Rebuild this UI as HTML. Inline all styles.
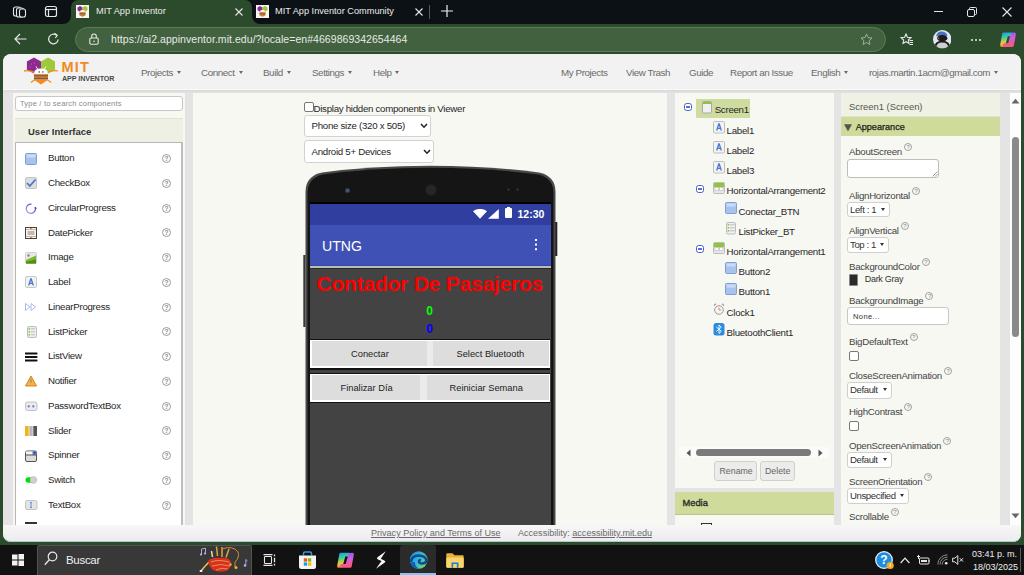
<!DOCTYPE html>
<html><head><meta charset="utf-8">
<style>
*{box-sizing:border-box;margin:0;padding:0}
html,body{width:1024px;height:575px;overflow:hidden;background:#2c4a2c;font-family:"Liberation Sans",sans-serif;position:relative}
.a{position:absolute}
.t{position:absolute;white-space:nowrap;line-height:1}
.nav{position:absolute;white-space:nowrap;line-height:1;color:#6a6a6a;font-size:9.8px;letter-spacing:-0.42px;top:67.7px}
.car{display:inline-block;width:0;height:0;border-left:2px solid transparent;border-right:2px solid transparent;border-top:3px solid #6a6a6a;vertical-align:middle;margin-left:4px;position:relative;top:-0.9px}
.pi{position:absolute;white-space:nowrap;line-height:1;color:#262626;font-size:9.7px;letter-spacing:-0.28px;margin-top:-0.42px}
.hq{position:absolute;width:9px;height:9px;border:1px solid #9a9a9a;border-radius:50%;font-size:6.5px;line-height:7px;text-align:center;color:#888;font-weight:bold}
.tr{position:absolute;white-space:nowrap;line-height:1;color:#262626;font-size:9.1px}
.pl{position:absolute;white-space:nowrap;line-height:1;color:#444;font-size:9.7px;letter-spacing:-0.28px;margin-top:-0.5px;left:849px}
.sel{position:absolute;left:847px;height:17px;border:1px solid #cfcfcf;border-radius:3px;background:#fff;font-size:9.6px;letter-spacing:-0.4px;color:#333;line-height:13.5px;padding-left:2px;white-space:nowrap}
.cb{position:absolute;left:849px;width:10px;height:10px;border:1px solid #777;border-radius:2px;background:#fff}
.phq{position:absolute;width:8px;height:8px;border:1px solid #a0a0a0;border-radius:50%;font-size:6px;line-height:6px;text-align:center;color:#888}
</style></head><body>
<!-- ============ TAB BAR ============ -->
<div class="a" style="left:0;top:0;width:1024px;height:24px;background:#0c1116"></div>
<!-- workspaces icon -->
<svg class="a" style="left:12px;top:5px" width="16" height="14" viewBox="0 0 16 14"><g fill="none" stroke="#e6e6e6" stroke-width="1.1"><rect x="1.5" y="2" width="7" height="9" rx="2"/><rect x="4.5" y="3" width="7" height="9" rx="2" fill="#0c1116"/><rect x="7.5" y="4" width="6" height="8" rx="2" fill="#0c1116"/></g></svg>
<svg class="a" style="left:44px;top:5px" width="14" height="13" viewBox="0 0 14 13"><g fill="none" stroke="#e6e6e6" stroke-width="1.2"><rect x="1.5" y="1.5" width="11" height="10" rx="2"/><line x1="1.5" y1="4.5" x2="12.5" y2="4.5"/><line x1="4.5" y1="4.5" x2="4.5" y2="11.5"/></g></svg>
<div class="a" style="left:71px;top:0;width:181px;height:25px;background:#2c4a2c;border-radius:7px 7px 0 0"></div>
<div class="a" style="left:63px;top:16px;width:8px;height:8px;background:#2c4a2c"></div><div class="a" style="left:62px;top:15px;width:9px;height:9px;background:#0c1116;border-bottom-right-radius:8px"></div>
<div class="a" style="left:252px;top:16px;width:8px;height:8px;background:#2c4a2c"></div><div class="a" style="left:252px;top:15px;width:9px;height:9px;background:#0c1116;border-bottom-left-radius:8px"></div>
<!-- favicon tab 1 -->
<svg class="a" style="left:76px;top:5px" width="13" height="13" viewBox="0 0 13 13"><rect width="13" height="13" fill="#f6f6f6"/><path d="M4 1L6.5 2.4V5.3L4 6.7L1.5 5.3V2.4Z" fill="#8d2a8e"/><path d="M9 1L11.5 2.4V5.3L9 6.7L6.5 5.3V2.4Z" fill="#9dc93b"/><path d="M3.5 6.5H9.5V10L6.5 12L3.5 10Z" fill="#f48b1f"/><path d="M3.8 6.8Q3.8 5 6.5 5Q9.2 5 9.2 6.8Z" fill="#fff"/><rect x="3.5" y="8" width="6" height="0.8" fill="#666"/><rect x="3.5" y="9.5" width="6" height="0.8" fill="#666"/></svg>
<div class="t" style="left:96px;top:7px;font-size:9.2px;color:#ececec">MIT App Inventor</div>
<svg class="a" style="left:235px;top:8px" width="8" height="8" viewBox="0 0 8 8"><path d="M0.5 0.5L7.5 7.5M7.5 0.5L0.5 7.5" stroke="#e6e6e6" stroke-width="1.1"/></svg>
<svg class="a" style="left:256px;top:5px" width="13" height="13" viewBox="0 0 13 13"><rect width="13" height="13" fill="#f6f6f6"/><path d="M4 1L6.5 2.4V5.3L4 6.7L1.5 5.3V2.4Z" fill="#8d2a8e"/><path d="M9 1L11.5 2.4V5.3L9 6.7L6.5 5.3V2.4Z" fill="#9dc93b"/><path d="M3.5 6.5H9.5V10L6.5 12L3.5 10Z" fill="#f48b1f"/><path d="M3.8 6.8Q3.8 5 6.5 5Q9.2 5 9.2 6.8Z" fill="#fff"/><rect x="3.5" y="8" width="6" height="0.8" fill="#666"/><rect x="3.5" y="9.5" width="6" height="0.8" fill="#666"/></svg>
<div class="t" style="left:275px;top:7px;font-size:9.2px;color:#ececec">MIT App Inventor Community</div>
<svg class="a" style="left:415px;top:8px" width="8" height="8" viewBox="0 0 8 8"><path d="M0.5 0.5L7.5 7.5M7.5 0.5L0.5 7.5" stroke="#e6e6e6" stroke-width="1.1"/></svg>
<div class="a" style="left:429px;top:5px;width:1px;height:14px;background:#5a5a5a"></div>
<svg class="a" style="left:441px;top:5px" width="12" height="12" viewBox="0 0 12 12"><path d="M6 0V12M0 6H12" stroke="#ececec" stroke-width="1.2"/></svg>
<!-- window controls -->
<div class="a" style="left:934px;top:11px;width:9px;height:1px;background:#e6e6e6"></div>
<svg class="a" style="left:967px;top:7px" width="10" height="10" viewBox="0 0 10 10"><g fill="none" stroke="#e6e6e6" stroke-width="1"><rect x="0.5" y="2.5" width="7" height="7" rx="1.5"/><path d="M2.5 2.5V1.5a1 1 0 0 1 1-1h5a1 1 0 0 1 1 1v5a1 1 0 0 1-1 1h-1"/></g></svg>
<svg class="a" style="left:1002px;top:7px" width="10" height="10" viewBox="0 0 10 10"><path d="M0.5 0.5L9.5 9.5M9.5 0.5L0.5 9.5" stroke="#e6e6e6" stroke-width="1.1"/></svg>

<!-- ============ TOOLBAR ============ -->
<svg class="a" style="left:14px;top:33px" width="13" height="12" viewBox="0 0 13 12"><path d="M12.5 6H1.5M6 1L1 6L6 11" fill="none" stroke="#e8e8e8" stroke-width="1.2"/></svg>
<svg class="a" style="left:47px;top:32px" width="13" height="14" viewBox="0 0 13 14"><path d="M11.2 7.5A4.8 4.8 0 1 1 9.5 3.3" fill="none" stroke="#e8e8e8" stroke-width="1.2"/><path d="M7.5 1.2L10.3 3.3L8.3 6" fill="none" stroke="#e8e8e8" stroke-width="1.2"/></svg>
<div class="a" style="left:75px;top:27px;width:811px;height:25px;background:#42613f;border:1.2px solid #5e7c5a;border-radius:13px"></div>
<svg class="a" style="left:89px;top:33px" width="10" height="12" viewBox="0 0 10 12"><g fill="none" stroke="#e8e8e8" stroke-width="1.1"><rect x="0.8" y="5" width="8.4" height="6.3" rx="1.2"/><path d="M2.7 5V3.3a2.3 2.3 0 0 1 4.6 0V5"/></g><circle cx="5" cy="8.2" r="0.8" fill="#e8e8e8"/></svg>
<div class="t" style="left:111px;top:34px;font-size:10.5px;color:#e6ebe6;letter-spacing:0.05px">https://ai2.appinventor.mit.edu/?locale=en#4669869342654464</div>
<svg class="a" style="left:860px;top:33px" width="13" height="13" viewBox="0 0 13 13"><path d="M6.5 1L8.1 4.6L12 5L9.1 7.6L9.9 11.5L6.5 9.5L3.1 11.5L3.9 7.6L1 5L4.9 4.6Z" fill="none" stroke="#9fb09f" stroke-width="1"/></svg>
<svg class="a" style="left:900px;top:33px" width="14" height="13" viewBox="0 0 14 13"><path d="M6 1L7.4 4.3L11 4.6L8.3 7L9 10.5L6 8.7L3 10.5L3.7 7L1 4.6L4.6 4.3Z" fill="none" stroke="#e8e8e8" stroke-width="1.1"/><path d="M9.5 7.5H13M10 9.5H13M9.5 11.5H13" stroke="#e8e8e8" stroke-width="1"/></svg>
<!-- avatar -->
<svg class="a" style="left:932.5px;top:30.3px" width="18.5" height="18.5" viewBox="0 0 18 18"><defs><clipPath id="avc"><circle cx="9" cy="9" r="9"/></clipPath></defs><g clip-path="url(#avc)"><rect width="18" height="18" fill="#dfe6f4"/><path d="M3 6Q4 1 9 1.5Q13.5 2 14 6Z" fill="#4d6fc0"/><ellipse cx="9" cy="8" rx="5" ry="3.2" fill="#1b1b1b"/><path d="M3.5 8L6 7.3L6 9.2Z" fill="#e2552a"/><path d="M1 18Q1 10.5 9 10.5Q17 10.5 17 18Z" fill="#1b1b1b"/><path d="M3 18Q3 12.2 9 12.2Q15 12.2 15 18Z" fill="#cfcfcf"/></g></svg>
<div class="a" style="left:970.5px;top:38.5px;width:2.2px;height:2.2px;background:#f0f0f0;border-radius:1px;box-shadow:4px 0 0 #f0f0f0,8px 0 0 #f0f0f0"></div>
<!-- copilot -->
<svg class="a" style="left:999px;top:31.5px" width="18" height="15.5" viewBox="0 0 20 17"><defs><linearGradient id="cgT" x1="0" y1="0" x2="0.2" y2="1"><stop offset="0" stop-color="#1e90f5"/><stop offset="0.4" stop-color="#3fd09a"/><stop offset="0.75" stop-color="#f6c72c"/><stop offset="1" stop-color="#f77a2a"/></linearGradient><linearGradient id="cgU" x1="0" y1="0" x2="0.2" y2="1"><stop offset="0" stop-color="#7a5cf7"/><stop offset="0.5" stop-color="#d05ce0"/><stop offset="1" stop-color="#f75a78"/></linearGradient></defs><path d="M5 0.5H14Q16 0.5 15.5 2.5L15 4.5H9.8L7 14.5Q6.5 16.5 4.5 16.5H3Q0.8 16.5 1.3 14L3.5 2Q3.8 0.5 5 0.5Z" fill="url(#cgT)"/><path d="M16.5 0.5H17Q19.2 0.5 18.7 3L16.5 15Q16.2 16.5 15 16.5H6Q4 16.5 4.5 14.5L5 12.5H10.2L13 2.5Q13.5 0.5 16.5 0.5Z" fill="url(#cgU)"/></svg>

<!-- ============ PAGE ============ -->
<div class="a" style="left:3px;top:54px;width:1018px;height:488px;background:#e4e4e4;border-radius:8px;overflow:hidden">
 <div class="a" style="left:0;top:0;width:1018px;height:35.5px;background:#f2f2f2;border-bottom:1.5px solid #f9f9f9"></div>
 <div class="a" style="left:0;top:35.5px;width:1018px;height:3.5px;background:linear-gradient(#d9d9d9,#e2e2e2)"></div>
</div>
<!-- logo -->
<svg class="a" style="left:20px;top:54px" width="44" height="36" viewBox="20 54 44 36">
 <path d="M34 57.6L41 61.4V69.8L34 73.6L26.9 69.8V61.4Z" fill="#8d2a8e"/>
 <path d="M48 57.6L55 61.4V69.8L48 73.6L41 69.8V61.4Z" fill="#9dc93b"/>
 <path d="M24 71Q29 70 34.5 72.5M57.8 70.8Q52.5 70 47.5 72.5" fill="none" stroke="#f48b1f" stroke-width="1.3"/>
 <path d="M34 74H48V79.8L41 84.6L34 79.8Z" fill="#f48b1f"/>
 <path d="M31 82.5L35 79.5M51.2 82.5L47 79.5" stroke="#f48b1f" stroke-width="1.3"/>
 <path d="M34 73.5Q34 68.5 41 68.5Q48 68.5 48 73.5Z" fill="#fff"/>
 <rect x="38.6" y="71.3" width="1.3" height="1.3" fill="#444"/><rect x="42.2" y="71.3" width="1.3" height="1.3" fill="#444"/>
 <rect x="34" y="75.2" width="14" height="1.3" fill="#5d5d6e"/>
 <rect x="34" y="77.7" width="14" height="1.3" fill="#5d5d6e"/>
 <path d="M37.5 68.8L36 66.5M44.5 68.8L46 66.5" stroke="#fff" stroke-width="1"/>
 <circle cx="31.5" cy="64" r="0.5" fill="#c27ac5"/><circle cx="34.5" cy="63" r="0.5" fill="#c27ac5"/><circle cx="30" cy="67" r="0.5" fill="#c27ac5"/>
</svg>
<div class="t" style="left:61.5px;top:59.5px;font-size:14.5px;font-weight:bold;color:#f28a1e;letter-spacing:1.2px">MIT</div>
<div class="t" style="left:62px;top:74.5px;font-size:7.2px;font-weight:bold;color:#4a4a4a;letter-spacing:-0.1px">APP INVENTOR</div>
<!-- nav -->
<div class="nav" style="left:141px">Projects<span class="car"></span></div>
<div class="nav" style="left:201px">Connect<span class="car"></span></div>
<div class="nav" style="left:263px">Build<span class="car"></span></div>
<div class="nav" style="left:312px">Settings<span class="car"></span></div>
<div class="nav" style="left:373px">Help<span class="car"></span></div>
<div class="nav" style="left:561px">My Projects</div>
<div class="nav" style="left:626px">View Trash</div>
<div class="nav" style="left:689px">Guide</div>
<div class="nav" style="left:730px">Report an Issue</div>
<div class="nav" style="left:811px">English<span class="car"></span></div>
<div class="nav" style="left:869px">rojas.martin.1acm@gmail.com<span class="car"></span></div>

<!-- panels -->
<div class="a" style="left:13px;top:93px;width:172px;height:432px;background:#f8f8f3"></div>
<div class="a" style="left:193px;top:93px;width:474px;height:432px;background:#f8f8f3"></div>
<div class="a" style="left:675px;top:93px;width:159px;height:395px;background:#f8f8f3"></div>
<div class="a" style="left:675px;top:492px;width:159px;height:23px;background:#cfdb9b;border-bottom:1px solid #b9c48a"></div>
<div class="a" style="left:675px;top:515px;width:159px;height:10px;background:#f8f8f3"></div>
<div class="a" style="left:841px;top:93px;width:159px;height:432px;background:#f8f8f3"></div>
<div class="a" style="left:1010px;top:93px;width:11px;height:432px;background:#fdfdfd"></div>
<svg class="a" style="left:1011px;top:98px" width="9" height="6" viewBox="0 0 9 6"><path d="M0.5 5.5L4.5 0.8L8.5 5.5Z" fill="#666"/></svg>
<div class="a" style="left:1012px;top:137px;width:7px;height:200px;background:#8a8a8a;border-radius:4px"></div>
<svg class="a" style="left:1011px;top:512.5px" width="9" height="6" viewBox="0 0 9 6"><path d="M0.5 0.5L4.5 5.2L8.5 0.5Z" fill="#666"/></svg>
<!-- ============ PALETTE ============ -->
<div class="a" style="left:15px;top:96px;width:168px;height:15px;background:#fff;border:1px solid #c8c8c8;border-radius:3px"></div>
<div class="t" style="left:20px;top:99.5px;font-size:7.5px;color:#8a8a8a;letter-spacing:0.2px">Type / to search components</div>
<div class="a" style="left:15px;top:118px;width:168px;height:24px;background:#eef0e3;border-top:1px solid #e0e3d0"></div>
<div class="t" style="left:28px;top:126.5px;font-size:9.5px;font-weight:bold;color:#333">User Interface</div>
<div class="a" style="left:15px;top:142px;width:168px;height:390px;background:#fff;border:1px solid #b8b8b8;border-right:2px solid #bdbdbd"></div>
<svg class="a" style="left:25px;top:152.50px" width="13" height="12" viewBox="0 0 13 12"><rect x="0.5" y="0.5" width="11" height="11" rx="1" fill="#a8c2ee" stroke="#7f9fd6"/><rect x="1.5" y="1.5" width="9" height="3" fill="#c9dbf7"/></svg>
<div class="pi" style="left:48px;top:153.86px">Button</div>
<div class="hq" style="left:162px;top:154.00px">?</div>
<svg class="a" style="left:25px;top:177.25px" width="13" height="12" viewBox="0 0 13 12"><rect x="0.5" y="0.5" width="11" height="11" rx="1.5" fill="#dedede" stroke="#c4c4c4"/><path d="M2 6L4.8 9L10.5 2.5" fill="none" stroke="#4677cc" stroke-width="1.8"/></svg>
<div class="pi" style="left:48px;top:178.61px">CheckBox</div>
<div class="hq" style="left:162px;top:178.75px">?</div>
<svg class="a" style="left:25px;top:202.00px" width="13" height="12" viewBox="0 0 13 12"><defs><linearGradient id="cpg" x1="1" y1="0" x2="0" y2="1"><stop offset="0" stop-color="#5a2fd0"/><stop offset="1" stop-color="#b9a8ee"/></linearGradient></defs><path d="M10.2 5.3A4.6 4.6 0 1 1 6.5 2.2" fill="none" stroke="url(#cpg)" stroke-width="1.3"/><path d="M10.2 5.3L10.9 7" stroke="#5a2fd0" stroke-width="1.6"/></svg>
<div class="pi" style="left:48px;top:203.36px">CircularProgress</div>
<div class="hq" style="left:162px;top:203.50px">?</div>
<svg class="a" style="left:25px;top:226.75px" width="13" height="12" viewBox="0 0 13 12"><rect x="0.5" y="0.5" width="11" height="11" fill="#f4f4f4" stroke="#444"/><line x1="1" y1="2.5" x2="11" y2="2.5" stroke="#f0a040" stroke-width="0.8"/><line x1="1" y1="9.5" x2="11" y2="9.5" stroke="#f0a040" stroke-width="0.8"/><rect x="2.5" y="4" width="7" height="4" fill="#bbb"/><line x1="6" y1="0" x2="6" y2="2" stroke="#444"/><line x1="6" y1="10" x2="6" y2="12" stroke="#444"/></svg>
<div class="pi" style="left:48px;top:228.11px">DatePicker</div>
<div class="hq" style="left:162px;top:228.25px">?</div>
<svg class="a" style="left:25px;top:251.50px" width="13" height="12" viewBox="0 0 13 12"><rect x="0.5" y="0.5" width="11" height="11" rx="1" fill="#e8e8e8" stroke="#cfcfcf"/><path d="M1 8L11 3.5V11.5H1Z" fill="#7bb82a"/><path d="M1 10L11 7.5V11.5H1Z" fill="#4f8e12"/><circle cx="3.5" cy="3.5" r="1.2" fill="#888"/></svg>
<div class="pi" style="left:48px;top:252.86px">Image</div>
<div class="hq" style="left:162px;top:253.00px">?</div>
<svg class="a" style="left:25px;top:276.25px" width="13" height="12" viewBox="0 0 13 12"><rect x="0.5" y="0.5" width="11" height="11" rx="1.5" fill="#f2f2f2" stroke="#c8c8c8"/><path d="M3 9.6L5.3 2.3H6.7L9 9.6H7.6L7.1 8H4.9L4.4 9.6ZM5.3 6.8H6.7L6 4.4Z" fill="#4a78d0" fill-rule="evenodd"/></svg>
<div class="pi" style="left:48px;top:277.61px">Label</div>
<div class="hq" style="left:162px;top:277.75px">?</div>
<svg class="a" style="left:25px;top:301.00px" width="13" height="12" viewBox="0 0 13 12"><path d="M0.5 2.5L5 6L0.5 9.5ZM6 2.5L10.5 6L6 9.5Z" fill="none" stroke="#9fb2e6" stroke-width="0.9"/></svg>
<div class="pi" style="left:48px;top:302.36px">LinearProgress</div>
<div class="hq" style="left:162px;top:302.50px">?</div>
<svg class="a" style="left:25px;top:325.75px" width="13" height="12" viewBox="0 0 13 12"><rect x="2.5" y="0.5" width="9" height="11" rx="1.5" fill="#f0f0f0" stroke="#bdbdbd"/><rect x="3.5" y="2" width="1.6" height="1.6" fill="#8bc34a"/><rect x="3.5" y="5" width="1.6" height="1.6" fill="#8bc34a"/><rect x="3.5" y="8" width="1.6" height="1.6" fill="#8bc34a"/><path d="M6 2.8H10M6 5.8H10M6 8.8H10" stroke="#bbb" stroke-width="1"/></svg>
<div class="pi" style="left:48px;top:327.11px">ListPicker</div>
<div class="hq" style="left:162px;top:327.25px">?</div>
<svg class="a" style="left:25px;top:350.50px" width="13" height="12" viewBox="0 0 13 12"><path d="M0.5 2.5H11.5M0.5 6H11.5M0.5 9.5H11.5" stroke="#111" stroke-width="2.2" stroke-linecap="round"/></svg>
<div class="pi" style="left:48px;top:351.86px">ListView</div>
<div class="hq" style="left:162px;top:352.00px">?</div>
<svg class="a" style="left:25px;top:375.25px" width="13" height="12" viewBox="0 0 13 12"><path d="M6 1L11.5 11H0.5Z" fill="#f0b544" stroke="#d9780f" stroke-width="0.9"/><path d="M6 4V8" stroke="#888" stroke-width="1"/></svg>
<div class="pi" style="left:48px;top:376.61px">Notifier</div>
<div class="hq" style="left:162px;top:376.75px">?</div>
<svg class="a" style="left:25px;top:400.00px" width="13" height="12" viewBox="0 0 13 12"><rect x="0.5" y="2" width="11.5" height="8.5" rx="2" fill="#eaeaea" stroke="#c2c2c2"/><path d="M2.5 6.3H5M3.75 5V7.6M7 6.3H9.5M8.25 5V7.6" stroke="#5b87d8" stroke-width="1"/></svg>
<div class="pi" style="left:48px;top:401.36px">PasswordTextBox</div>
<div class="hq" style="left:162px;top:401.50px">?</div>
<svg class="a" style="left:25px;top:424.75px" width="13" height="12" viewBox="0 0 13 12"><rect x="0" y="1" width="4" height="10" fill="#f2b416"/><rect x="4" y="1" width="4" height="10" fill="#b8b8b8"/><rect x="8" y="1" width="4" height="10" fill="#555"/><path d="M4 1V11M8 1V11" stroke="#fff" stroke-width="0.6"/></svg>
<div class="pi" style="left:48px;top:426.11px">Slider</div>
<div class="hq" style="left:162px;top:426.25px">?</div>
<svg class="a" style="left:25px;top:449.50px" width="13" height="12" viewBox="0 0 13 12"><rect x="0.5" y="1" width="11" height="10.5" rx="1.5" fill="#dcdcdc" stroke="#555"/><rect x="1" y="1.5" width="10" height="3" fill="#f5f5f5"/><rect x="7.5" y="1" width="4" height="4" fill="#5a86d6"/><path d="M8.3 2.3H10.7L9.5 3.8Z" fill="#222"/><line x1="0.5" y1="5" x2="11.5" y2="5" stroke="#555"/></svg>
<div class="pi" style="left:48px;top:450.86px">Spinner</div>
<div class="hq" style="left:162px;top:451.00px">?</div>
<svg class="a" style="left:25px;top:474.25px" width="13" height="12" viewBox="0 0 13 12"><rect x="0.5" y="3.2" width="8" height="5.6" rx="2.8" fill="#00e000"/><circle cx="8.5" cy="6" r="3.4" fill="#cfcfcf" stroke="#bcbcbc" stroke-width="0.6"/></svg>
<div class="pi" style="left:48px;top:475.61px">Switch</div>
<div class="hq" style="left:162px;top:475.75px">?</div>
<svg class="a" style="left:25px;top:499.00px" width="13" height="12" viewBox="0 0 13 12"><rect x="0.5" y="1.5" width="11.5" height="9" rx="1.5" fill="#e4e4e4" stroke="#c4c4c4"/><path d="M5 3.5H7M5 8.5H7M6 3.5V8.5" stroke="#5b87d8" stroke-width="0.9"/></svg>
<div class="pi" style="left:48px;top:500.36px">TextBox</div>
<div class="hq" style="left:162px;top:500.50px">?</div>
<div class="a" style="left:25px;top:522px;width:12px;height:2px;background:#333"></div>
<!-- ============ VIEWER ============ -->
<div class="a" style="left:303.5px;top:101.8px;width:10px;height:10px;border:1px solid #767676;border-radius:2px;background:#fff"></div>
<div class="t" style="left:313.5px;top:104px;font-size:9.7px;letter-spacing:-0.28px;margin-top:-0.5px;color:#262626">Display hidden components in Viewer</div>
<div class="a" style="left:303.5px;top:114.5px;width:127px;height:22.5px;border:1px solid #d2d2d2;border-radius:3px;background:#fff"></div>
<div class="t" style="left:311.5px;top:121.5px;font-size:9.7px;letter-spacing:-0.28px;margin-top:-0.5px;color:#262626">Phone size (320 x 505)</div>
<svg class="a" style="left:420px;top:123px" width="8" height="6" viewBox="0 0 8 6"><path d="M1 1L4 4.2L7 1" fill="none" stroke="#222" stroke-width="1.5"/></svg>
<div class="a" style="left:303.5px;top:140px;width:130.5px;height:22.7px;border:1px solid #d2d2d2;border-radius:3px;background:#fff"></div>
<div class="t" style="left:311.5px;top:147px;font-size:9.7px;letter-spacing:-0.28px;margin-top:-0.5px;color:#262626">Android 5+ Devices</div>
<svg class="a" style="left:423px;top:148.5px" width="8" height="6" viewBox="0 0 8 6"><path d="M1 1L4 4.2L7 1" fill="none" stroke="#222" stroke-width="1.5"/></svg>

<!-- phone -->
<div class="a" style="left:193px;top:160px;width:474px;height:365px;overflow:hidden">
<svg class="a" style="left:0;top:0" width="474" height="365" viewBox="193 160 474 365">
 <path d="M303.3 327 V255 H305.6 V327Z" fill="#3a3a3a"/>
 <path d="M555 222 H557.3 V256 H555Z" fill="#222"/>
 <path d="M305.5 600 V192 Q305.5 176 322 172.5 Q370 166 430.5 165.8 Q491 166 539 172.5 Q555.5 176 555.5 192 V600Z" fill="#4a4a4a"/>
 <path d="M307.5 600 V193 Q307.5 178 323 174.5 Q371 168 430.5 167.8 Q490 168 538 174.5 Q553.5 178 553.5 193 V600Z" fill="#151515"/>
</svg>
 <div class="a" style="left:117px;top:42px;width:241px;height:400px;background:#000"></div>
 <div class="a" style="left:152.5px;top:28.5px;width:3px;height:3px;border-radius:50%;background:#3a5aa0;box-shadow:0 0 0 1px #3c3c3c"></div>
 <div class="a" style="left:233px;top:25px;width:10px;height:10px;border-radius:50%;background:#262626;box-shadow:0 0 0 1px #1e1e1e"></div>
 <div class="a" style="left:314px;top:28px;width:3px;height:3px;border-radius:50%;background:#2c2c2c"></div>
 <div class="a" style="left:323px;top:28px;width:3px;height:3px;border-radius:50%;background:#2c2c2c"></div>
</div>
<!-- screen -->
<div class="a" style="left:310px;top:203.8px;width:240.5px;height:321px;background:#434343;overflow:hidden">
 <div class="a" style="left:0;top:0;width:241px;height:21px;background:#303f9f"></div>
 <div class="a" style="left:0;top:21px;width:241px;height:41px;background:#3f51b5"></div>
 <div class="a" style="left:0;top:61px;width:241px;height:1.2px;background:#3346b0"></div><div class="a" style="left:0;top:62.2px;width:241px;height:2.2px;background:#bdbdb5"></div><div class="a" style="left:0;top:64.4px;width:241px;height:1px;background:#2a2a2a"></div>
</div>
<!-- status icons -->
<svg class="a" style="left:472.5px;top:208.5px" width="14" height="10" viewBox="0 0 14 10"><path d="M0 2.2Q7 -2.6 14 2.2L7 9.8Z" fill="#fff"/></svg>
<svg class="a" style="left:488px;top:208.5px" width="11" height="10" viewBox="0 0 11 10"><path d="M10.8 0V9.8H0Z" fill="#fff"/></svg>
<div class="a" style="left:504.5px;top:208px;width:7px;height:10px;background:#fff;border-radius:1px"></div>
<div class="a" style="left:506.5px;top:207px;width:3px;height:1.5px;background:#fff"></div>
<div class="t" style="left:517.5px;top:208.5px;font-size:10.5px;font-weight:bold;color:#fff">12:30</div>
<div class="t" style="left:322px;top:239px;font-size:14.1px;color:#fff">UTNG</div>
<div class="a" style="left:534.8px;top:239px;width:2.4px;height:2.4px;background:#fff;box-shadow:0 4.6px 0 #fff,0 9.2px 0 #fff"></div>
<!-- screen content -->
<div class="t" style="left:316.5px;top:273.2px;font-size:21px;letter-spacing:-0.22px;font-weight:bold;color:#ff0000">Contador De Pasajeros</div>
<div class="t" style="left:426.3px;top:304.7px;font-size:12px;font-weight:bold;color:#00ff00">0</div>
<div class="t" style="left:426.3px;top:322.9px;font-size:12px;font-weight:bold;color:#0000ff">0</div>
<!-- row1 -->
<div class="a" style="left:310.3px;top:339px;width:240px;height:1px;background:#111"></div>
<div class="a" style="left:310.3px;top:340px;width:240px;height:27.5px;background:#fff"></div>
<div class="a" style="left:312px;top:341.3px;width:114.6px;height:24.8px;background:#dddddd"></div>
<div class="a" style="left:426.6px;top:341.3px;width:6.3px;height:24.8px;background:#ebebeb"></div>
<div class="a" style="left:432.9px;top:341.3px;width:115.7px;height:24.8px;background:#dddddd"></div>
<div class="a" style="left:310.3px;top:367.5px;width:240px;height:2px;background:#111"></div>
<div class="t" style="left:351px;top:349.8px;font-size:9.3px;color:#222">Conectar</div>
<div class="t" style="left:456.5px;top:349.8px;font-size:9.3px;color:#222">Select Bluetooth</div>
<!-- row2 -->
<div class="a" style="left:310.3px;top:372.8px;width:240px;height:1.2px;background:#111"></div>
<div class="a" style="left:310.3px;top:374px;width:240px;height:27.5px;background:#fff"></div>
<div class="a" style="left:312px;top:375.3px;width:108.3px;height:24.8px;background:#dddddd"></div>
<div class="a" style="left:420.3px;top:375.3px;width:7px;height:24.8px;background:#ebebeb"></div>
<div class="a" style="left:427.3px;top:375.3px;width:121.3px;height:24.8px;background:#dddddd"></div>
<div class="a" style="left:310.3px;top:401.5px;width:240px;height:1.5px;background:#111"></div>
<div class="t" style="left:340.5px;top:383.8px;font-size:9.3px;color:#222">Finalizar Día</div>
<div class="t" style="left:449.5px;top:383.8px;font-size:9.3px;color:#222">Reiniciar Semana</div>
<!-- ============ COMPONENTS ============ -->
<div class="a" style="left:696px;top:98.8px;width:53.5px;height:19.2px;background:#cfdc9f"></div>
<svg class="a" style="left:683.8px;top:103.20px" width="8" height="8" viewBox="0 0 8 8"><rect x="0.5" y="0.5" width="7" height="7" rx="2.2" fill="#fff" stroke="#4a5fc0" stroke-width="1"/><path d="M2 4H6" stroke="#1030e0" stroke-width="1.4"/></svg>
<svg class="a" style="left:702px;top:101px" width="10" height="13" viewBox="0 0 10 13"><rect x="0.5" y="0.5" width="9" height="11.5" rx="1" fill="#f0f0f0" stroke="#a9a9a9"/><rect x="1" y="1" width="8" height="2" fill="#8fc53a"/></svg>
<div class="tr" style="left:714.7px;top:105.80px;font-size:9.7px;letter-spacing:-0.28px;margin-top:-0.5px;color:#262626">Screen1</div>
<svg class="a" style="left:713px;top:121.0px" width="12" height="13" viewBox="0 0 12 13"><rect x="0.5" y="0.5" width="11" height="11.5" rx="1" fill="#f3f3f3" stroke="#bdbdbd"/><path d="M3 9.6L5.3 2.3H6.7L9 9.6H7.6L7.1 8H4.9L4.4 9.6ZM5.3 6.8H6.7L6 4.4Z" fill="#4a78d0" fill-rule="evenodd"/></svg>
<div class="tr" style="left:726.6px;top:126.30px;font-size:9.7px;letter-spacing:-0.28px;margin-top:-0.5px;color:#262626">Label1</div>
<svg class="a" style="left:713px;top:141.2px" width="12" height="13" viewBox="0 0 12 13"><rect x="0.5" y="0.5" width="11" height="11.5" rx="1" fill="#f3f3f3" stroke="#bdbdbd"/><path d="M3 9.6L5.3 2.3H6.7L9 9.6H7.6L7.1 8H4.9L4.4 9.6ZM5.3 6.8H6.7L6 4.4Z" fill="#4a78d0" fill-rule="evenodd"/></svg>
<div class="tr" style="left:726.6px;top:146.50px;font-size:9.7px;letter-spacing:-0.28px;margin-top:-0.5px;color:#262626">Label2</div>
<svg class="a" style="left:713px;top:161.4px" width="12" height="13" viewBox="0 0 12 13"><rect x="0.5" y="0.5" width="11" height="11.5" rx="1" fill="#f3f3f3" stroke="#bdbdbd"/><path d="M3 9.6L5.3 2.3H6.7L9 9.6H7.6L7.1 8H4.9L4.4 9.6ZM5.3 6.8H6.7L6 4.4Z" fill="#4a78d0" fill-rule="evenodd"/></svg>
<div class="tr" style="left:726.6px;top:166.70px;font-size:9.7px;letter-spacing:-0.28px;margin-top:-0.5px;color:#262626">Label3</div>
<svg class="a" style="left:713px;top:181.6px" width="12" height="13" viewBox="0 0 12 13"><rect x="0.5" y="0.5" width="11" height="11" rx="1" fill="#e6e6e6" stroke="#bdbdbd"/><rect x="1" y="1" width="10" height="4" fill="#8fc53a"/><rect x="2" y="5.5" width="3.5" height="3" fill="#fff" stroke="#aaa" stroke-width="0.5"/><rect x="6.5" y="5.5" width="3.5" height="3" fill="#fff" stroke="#aaa" stroke-width="0.5"/></svg>
<div class="tr" style="left:726.6px;top:186.90px;font-size:9.7px;letter-spacing:-0.28px;margin-top:-0.5px;color:#262626">HorizontalArrangement2</div>
<svg class="a" style="left:696.3px;top:184.70px" width="8" height="8" viewBox="0 0 8 8"><rect x="0.5" y="0.5" width="7" height="7" rx="2.2" fill="#fff" stroke="#4a5fc0" stroke-width="1"/><path d="M2 4H6" stroke="#1030e0" stroke-width="1.4"/></svg>
<svg class="a" style="left:725px;top:201.8px" width="12" height="13" viewBox="0 0 12 13"><rect x="0.5" y="0.5" width="11" height="11" rx="1" fill="#a8c2ee" stroke="#7f9fd6"/><rect x="1.5" y="1.5" width="9" height="3" fill="#c9dbf7"/></svg>
<div class="tr" style="left:738.6px;top:207.10px;font-size:9.7px;letter-spacing:-0.28px;margin-top:-0.5px;color:#262626">Conectar_BTN</div>
<svg class="a" style="left:725px;top:222.0px" width="12" height="13" viewBox="0 0 12 13"><rect x="1.5" y="0.5" width="9" height="11.5" rx="1.5" fill="#f0f0f0" stroke="#bdbdbd"/><rect x="2.6" y="2" width="1.6" height="1.6" fill="#8bc34a"/><rect x="2.6" y="5" width="1.6" height="1.6" fill="#8bc34a"/><rect x="2.6" y="8" width="1.6" height="1.6" fill="#8bc34a"/><path d="M5 2.8H9.5M5 5.8H9.5M5 8.8H9.5" stroke="#bbb" stroke-width="1"/></svg>
<div class="tr" style="left:738.6px;top:227.30px;font-size:9.7px;letter-spacing:-0.28px;margin-top:-0.5px;color:#262626">ListPicker_BT</div>
<svg class="a" style="left:713px;top:242.2px" width="12" height="13" viewBox="0 0 12 13"><rect x="0.5" y="0.5" width="11" height="11" rx="1" fill="#e6e6e6" stroke="#bdbdbd"/><rect x="1" y="1" width="10" height="4" fill="#8fc53a"/><rect x="2" y="5.5" width="3.5" height="3" fill="#fff" stroke="#aaa" stroke-width="0.5"/><rect x="6.5" y="5.5" width="3.5" height="3" fill="#fff" stroke="#aaa" stroke-width="0.5"/></svg>
<div class="tr" style="left:726.6px;top:247.50px;font-size:9.7px;letter-spacing:-0.28px;margin-top:-0.5px;color:#262626">HorizontalArrangement1</div>
<svg class="a" style="left:696.3px;top:245.30px" width="8" height="8" viewBox="0 0 8 8"><rect x="0.5" y="0.5" width="7" height="7" rx="2.2" fill="#fff" stroke="#4a5fc0" stroke-width="1"/><path d="M2 4H6" stroke="#1030e0" stroke-width="1.4"/></svg>
<svg class="a" style="left:725px;top:262.4px" width="12" height="13" viewBox="0 0 12 13"><rect x="0.5" y="0.5" width="11" height="11" rx="1" fill="#a8c2ee" stroke="#7f9fd6"/><rect x="1.5" y="1.5" width="9" height="3" fill="#c9dbf7"/></svg>
<div class="tr" style="left:738.6px;top:267.70px;font-size:9.7px;letter-spacing:-0.28px;margin-top:-0.5px;color:#262626">Button2</div>
<svg class="a" style="left:725px;top:282.6px" width="12" height="13" viewBox="0 0 12 13"><rect x="0.5" y="0.5" width="11" height="11" rx="1" fill="#a8c2ee" stroke="#7f9fd6"/><rect x="1.5" y="1.5" width="9" height="3" fill="#c9dbf7"/></svg>
<div class="tr" style="left:738.6px;top:287.90px;font-size:9.7px;letter-spacing:-0.28px;margin-top:-0.5px;color:#262626">Button1</div>
<svg class="a" style="left:713px;top:302.8px" width="12" height="13" viewBox="0 0 12 13"><circle cx="6" cy="7" r="4.3" fill="#f6f6f6" stroke="#9a9a9a" stroke-width="1"/><path d="M6 4.5V7H8" fill="none" stroke="#f08a24" stroke-width="1"/><path d="M1 2.5L3 0.8M11 2.5L9 0.8" stroke="#9a9a9a" stroke-width="1.2"/></svg>
<div class="tr" style="left:726.6px;top:308.10px;font-size:9.7px;letter-spacing:-0.28px;margin-top:-0.5px;color:#262626">Clock1</div>
<svg class="a" style="left:713px;top:323.0px" width="12" height="13" viewBox="0 0 12 13"><rect x="0.5" y="0" width="11" height="12.5" rx="2.5" fill="#2a8be0"/><path d="M3.3 4L8.3 8.3L6 10.5V2L8.3 4.2L3.3 8.5" fill="none" stroke="#fff" stroke-width="0.9"/></svg>
<div class="tr" style="left:726.6px;top:328.30px;font-size:9.7px;letter-spacing:-0.28px;margin-top:-0.5px;color:#262626">BluetoothClient1</div>
<div class="a" style="left:679px;top:446.7px;width:150px;height:11px;background:#fbfbf9"></div>
<svg class="a" style="left:686px;top:448.5px" width="5" height="8" viewBox="0 0 5 8"><path d="M4.5 0.5V7.5L0.5 4Z" fill="#555"/></svg>
<svg class="a" style="left:818px;top:448.5px" width="5" height="8" viewBox="0 0 5 8"><path d="M0.5 0.5V7.5L4.5 4Z" fill="#555"/></svg>
<div class="a" style="left:696px;top:448.8px;width:114.5px;height:7px;background:#7b7b7b;border-radius:3.5px"></div>
<div class="a" style="left:714px;top:461.3px;width:42.7px;height:19.4px;background:#ececea;border:1px solid #d0d0d0;border-radius:3px"></div>
<div class="a" style="left:760.3px;top:461.3px;width:34.7px;height:19.4px;background:#ececea;border:1px solid #d0d0d0;border-radius:3px"></div>
<div class="tr" style="left:719.5px;top:466.8px;font-size:8.8px;color:#666">Rename</div>
<div class="tr" style="left:765px;top:466.8px;font-size:8.8px;color:#666">Delete</div>
<div class="tr" style="left:682.5px;top:498.9px;font-size:9.3px;color:#2a2a2a;-webkit-text-stroke:0.35px #2a2a2a">Media</div>
<div class="a" style="left:701px;top:522.5px;width:11px;height:3px;border:1px solid #333;border-bottom:none"></div>
<!-- ============ PROPERTIES ============ -->
<div class="a" style="left:841px;top:93px;width:159px;height:24.4px;background:#eef1e3;border-bottom:1px solid #dfe3cf"></div>
<div class="t" style="left:849px;top:102px;font-size:9.4px;color:#555">Screen1 (Screen)</div>
<div class="a" style="left:841px;top:117.4px;width:159px;height:18.6px;background:#cfdb9a"></div>
<svg class="a" style="left:844.4px;top:123.5px" width="8" height="8" viewBox="0 0 8 8"><path d="M0 0.3H8L4 7.6Z" fill="#555"/></svg>
<div class="t" style="left:855.7px;top:122.5px;font-size:9.1px;color:#1a1a1a;-webkit-text-stroke:0.25px #1a1a1a">Appearance</div>
<div class="pl" style="top:147.90px">AboutScreen<span class="phq" style="position:relative;display:inline-block;left:2px;top:-4px;vertical-align:top;font-size:6px;line-height:6px">?</span></div>
<div class="a" style="left:847.3px;top:158.5px;width:91.6px;height:19.9px;background:#fff;border:1px solid #bdbdbd;border-radius:3px"></div>
<svg class="a" style="left:932px;top:171px" width="6" height="6" viewBox="0 0 6 6"><path d="M5.5 0.5L0.5 5.5M5.5 3L3 5.5" stroke="#888" stroke-width="0.8"/></svg>
<div class="pl" style="top:191.20px">AlignHorizontal<span class="phq" style="position:relative;display:inline-block;left:2px;top:-4px;vertical-align:top;font-size:6px;line-height:6px">?</span></div>
<div class="sel" style="top:201.5px;height:15.8px;width:43.0px">Left : 1<span style="display:inline-block;width:0;height:0;border-left:2px solid transparent;border-right:2px solid transparent;border-top:3px solid #333;position:absolute;right:4px;top:5px"></span></div>
<div class="pl" style="top:226.80px">AlignVertical<span class="phq" style="position:relative;display:inline-block;left:2px;top:-4px;vertical-align:top;font-size:6px;line-height:6px">?</span></div>
<div class="sel" style="top:237px;height:16.4px;width:42.3px">Top : 1<span style="display:inline-block;width:0;height:0;border-left:2px solid transparent;border-right:2px solid transparent;border-top:3px solid #333;position:absolute;right:4px;top:5px"></span></div>
<div class="pl" style="top:262.90px">BackgroundColor<span class="phq" style="position:relative;display:inline-block;left:2px;top:-4px;vertical-align:top;font-size:6px;line-height:6px">?</span></div>
<div class="a" style="left:849px;top:273.8px;width:9px;height:12.2px;background:#2a2a2a;border:1px solid #888;border-radius:1px"></div>
<div class="pl" style="left:864.7px;top:275.6px;color:#333;font-size:9px">Dark Gray</div>
<div class="pl" style="top:296.80px">BackgroundImage<span class="phq" style="position:relative;display:inline-block;left:2px;top:-4px;vertical-align:top;font-size:6px;line-height:6px">?</span></div>
<div class="a" style="left:847.3px;top:306.6px;width:101.3px;height:18.7px;background:#fff;border:1px solid #c8c8c8;border-radius:3px"></div>
<div class="t" style="left:853px;top:312.5px;font-size:7.5px;color:#333;letter-spacing:0.4px">None...</div>
<div class="pl" style="top:337.50px">BigDefaultText<span class="phq" style="position:relative;display:inline-block;left:2px;top:-4px;vertical-align:top;font-size:6px;line-height:6px">?</span></div>
<div class="cb" style="top:351.3px"></div>
<div class="pl" style="top:371.20px">CloseScreenAnimation<span class="phq" style="position:relative;display:inline-block;left:2px;top:-4px;vertical-align:top;font-size:6px;line-height:6px">?</span></div>
<div class="sel" style="top:381.9px;height:16.7px;width:44.6px">Default<span style="display:inline-block;width:0;height:0;border-left:2px solid transparent;border-right:2px solid transparent;border-top:3px solid #333;position:absolute;right:4px;top:5px"></span></div>
<div class="pl" style="top:407.20px">HighContrast<span class="phq" style="position:relative;display:inline-block;left:2px;top:-4px;vertical-align:top;font-size:6px;line-height:6px">?</span></div>
<div class="cb" style="top:421px"></div>
<div class="pl" style="top:441.10px">OpenScreenAnimation<span class="phq" style="position:relative;display:inline-block;left:2px;top:-4px;vertical-align:top;font-size:6px;line-height:6px">?</span></div>
<div class="sel" style="top:451.7px;height:16.4px;width:44.6px">Default<span style="display:inline-block;width:0;height:0;border-left:2px solid transparent;border-right:2px solid transparent;border-top:3px solid #333;position:absolute;right:4px;top:5px"></span></div>
<div class="pl" style="top:477.10px">ScreenOrientation<span class="phq" style="position:relative;display:inline-block;left:2px;top:-4px;vertical-align:top;font-size:6px;line-height:6px">?</span></div>
<div class="sel" style="top:488px;height:16.2px;width:62.3px">Unspecified<span style="display:inline-block;width:0;height:0;border-left:2px solid transparent;border-right:2px solid transparent;border-top:3px solid #333;position:absolute;right:4px;top:5px"></span></div>
<div class="pl" style="top:512.80px">Scrollable<span class="phq" style="position:relative;display:inline-block;left:2px;top:-4px;vertical-align:top;font-size:6px;line-height:6px">?</span></div>
<!-- ============ FOOTER ============ -->
<div class="a" style="left:3px;top:524.5px;width:1018px;height:17.2px;background:linear-gradient(#f7f7f7,#ececec);border-bottom:1px solid #b5c3d8;border-radius:0 0 8px 8px"></div>
<div class="t" style="left:371px;top:528.8px;font-size:9.05px;color:#6a6a6a;text-decoration:underline">Privacy Policy and Terms of Use</div>
<div class="t" style="left:518px;top:528.8px;font-size:9.05px;color:#6a6a6a">Accessibility: <span style="text-decoration:underline">accessibility.mit.edu</span></div>

<!-- ============ TASKBAR ============ -->
<div class="a" style="left:0;top:545px;width:1024px;height:30px;background:#121212"></div>
<svg class="a" style="left:12px;top:554px" width="12" height="12" viewBox="0 0 12 12"><path d="M0 0.5H5.5V5.5H0ZM6.5 0H12V5.5H6.5ZM0 6.5H5.5V11.5H0ZM6.5 6.5H12V12H6.5Z" fill="#f2f2f2"/></svg>
<div class="a" style="left:36.5px;top:545px;width:215px;height:30px;background:#383838;border:1px solid #525252;border-bottom:none;border-radius:2px 2px 0 0"></div>
<svg class="a" style="left:44px;top:551px" width="14" height="15" viewBox="0 0 14 15"><circle cx="8.5" cy="5.5" r="4.3" fill="none" stroke="#eaeaea" stroke-width="1.2"/><path d="M5.3 8.8L0.8 13.8" stroke="#eaeaea" stroke-width="1.3"/></svg>
<div class="t" style="left:66px;top:554.5px;font-size:11.5px;letter-spacing:-0.3px;color:#f0f0f0">Buscar</div>
<!-- bagpipe decoration -->
<svg class="a" style="left:196px;top:545px" width="56" height="30" viewBox="196 545 56 30">
 <path d="M217.5 556L216.5 546.5M222 557L222 547M226 557.5L229 549" stroke="#e3a23a" stroke-width="1.5"/>
 <path d="M212.5 557L211.5 551" stroke="#f0e0b0" stroke-width="1.5"/>
 <path d="M222 549Q233 545 238 552Q240 557 235 562L235 567" fill="none" stroke="#d98b2a" stroke-width="1"/>
 <path d="M201 571Q205 566 209 562" stroke="#f0c060" stroke-width="1.6"/>
 <ellipse cx="201" cy="571" rx="1.5" ry="1" fill="#fff"/>
 <path d="M208 561Q212 557 220 558Q229 557 231 562Q232 568 226 571Q218 573 213 570Q209 567 208 561Z" fill="#d8321c"/>
 <path d="M211 562Q218 559 229 562M212 566Q220 563 230 566M216 570Q222 567 228 569" stroke="#f2b070" stroke-width="0.7" fill="none"/>
 <circle cx="236" cy="567.5" r="1.5" fill="#f0b030"/>
 <circle cx="230.5" cy="564.5" r="1.2" fill="#f0b030"/>
 <path d="M201.5 554V549L205.5 548.2V553" stroke="#b8b8f0" stroke-width="0.9" fill="none"/><circle cx="201" cy="554.5" r="1.1" fill="#b8b8f0"/><circle cx="205" cy="553.5" r="1.1" fill="#b8b8f0"/>
 <path d="M245.8 565V559.5L247.5 561" stroke="#b0b0f0" stroke-width="0.9" fill="none"/><circle cx="245" cy="565.5" r="1.3" fill="#b0b0f0"/>
</svg>
<!-- task view -->
<svg class="a" style="left:263px;top:553.5px" width="13" height="12" viewBox="0 0 13 12"><g fill="none" stroke="#e8e8e8" stroke-width="1.1"><rect x="1.5" y="2.5" width="7" height="7" rx="0.8"/><path d="M0.5 0.6H9.5M0.5 11.4H9.5"/></g><path d="M11.5 0.5V2.2M11.5 3.8V8.2M11.5 9.8V11.5" stroke="#e8e8e8" stroke-width="1.3"/></svg>
<!-- store -->
<svg class="a" style="left:298px;top:551px" width="19" height="19" viewBox="0 0 19 19"><path d="M5.5 4.5V2.5Q5.5 1 7 1H12Q13.5 1 13.5 2.5V4.5" fill="none" stroke="#2f9be6" stroke-width="1.5"/><path d="M1 4.5H18V15.5Q18 18 15.5 18H3.5Q1 18 1 15.5Z" fill="#f4f4f4"/><rect x="5.8" y="7.3" width="3.3" height="3.3" fill="#f25022"/><rect x="9.9" y="7.3" width="3.3" height="3.3" fill="#7fba00"/><rect x="5.8" y="11.4" width="3.3" height="3.3" fill="#00a4ef"/><rect x="9.9" y="11.4" width="3.3" height="3.3" fill="#ffb900"/></svg>
<!-- copilot -->
<svg class="a" style="left:335.5px;top:551.5px" width="19" height="16.5" viewBox="0 0 20 17"><defs><linearGradient id="cgT2" x1="0" y1="0" x2="0.2" y2="1"><stop offset="0" stop-color="#1e90f5"/><stop offset="0.4" stop-color="#3fd09a"/><stop offset="0.75" stop-color="#f6c72c"/><stop offset="1" stop-color="#f77a2a"/></linearGradient><linearGradient id="cgU2" x1="0" y1="0" x2="0.2" y2="1"><stop offset="0" stop-color="#7a5cf7"/><stop offset="0.5" stop-color="#d05ce0"/><stop offset="1" stop-color="#f75a78"/></linearGradient></defs><path d="M5 0.5H14Q16 0.5 15.5 2.5L15 4.5H9.8L7 14.5Q6.5 16.5 4.5 16.5H3Q0.8 16.5 1.3 14L3.5 2Q3.8 0.5 5 0.5Z" fill="url(#cgT2)"/><path d="M16.5 0.5H17Q19.2 0.5 18.7 3L16.5 15Q16.2 16.5 15 16.5H6Q4 16.5 4.5 14.5L5 12.5H10.2L13 2.5Q13.5 0.5 16.5 0.5Z" fill="url(#cgU2)"/></svg>
<!-- lightning app -->
<svg class="a" style="left:375px;top:551px" width="12" height="18" viewBox="0 0 12 18"><path d="M10.8 0.3L2.5 6.2Q1 7.5 3 8.5L6.5 10L1 17.8L9.8 11.5Q11.2 10.3 9.3 9.4L5.8 7.8Z" fill="#f6f6f6"/></svg>
<!-- edge active -->
<div class="a" style="left:400.4px;top:545px;width:35.8px;height:30px;background:#2b2b2b;border-radius:3px"></div>
<div class="a" style="left:400.4px;top:572.8px;width:35.8px;height:2.2px;background:#86c4f6"></div>
<svg class="a" style="left:408.5px;top:551px" width="20" height="18" viewBox="0 0 20 18"><defs><linearGradient id="eg" x1="0" y1="0" x2="1" y2="0.6"><stop offset="0" stop-color="#1c8fe0"/><stop offset="0.55" stop-color="#33b5d8"/><stop offset="1" stop-color="#6fd86a"/></linearGradient></defs><circle cx="9.7" cy="9" r="8.8" fill="url(#eg)"/><path d="M2 11Q2.5 5 9 4.5Q16.5 4.5 17.5 9.5Q17 12.5 13 12.5Q9.8 12.5 10 10Q10.5 8.8 12 9" fill="none" stroke="#0c4a94" stroke-width="2.6"/><path d="M1.5 11.5Q3 17.5 10 17.8Q5.5 15 6 11" fill="#0d5fb8"/></svg>
<!-- explorer -->
<svg class="a" style="left:446px;top:553px" width="18" height="15" viewBox="0 0 18 15"><path d="M0.3 1.5Q0.3 0.3 1.5 0.3H6.5L8.5 2.3H16.5Q17.7 2.3 17.7 3.5V13.5Q17.7 14.7 16.5 14.7H1.5Q0.3 14.7 0.3 13.5Z" fill="#e9b33a"/><rect x="0.3" y="4.5" width="17.4" height="10.2" rx="1.3" fill="#fbd46a"/><path d="M5.5 14.7V9.5H12.5V14.7H10.8V11H7.2V14.7Z" fill="#1e7ad6"/></svg>
<!-- tray -->
<svg class="a" style="left:875px;top:551px" width="20" height="19" viewBox="0 0 20 19"><circle cx="9" cy="9" r="8.3" fill="#1e8fe0" stroke="#f4f4f4" stroke-width="1.2"/><text x="9" y="13.2" font-family="Liberation Sans" font-size="12" font-weight="bold" fill="#fff" text-anchor="middle">?</text><circle cx="15.2" cy="14.5" r="3.6" fill="#f4a91c"/><rect x="14.7" y="12.6" width="1" height="3.6" fill="#fff"/></svg>
<svg class="a" style="left:900px;top:557px" width="10" height="7" viewBox="0 0 10 7"><path d="M0.6 6L5 1.2L9.4 6" fill="none" stroke="#eaeaea" stroke-width="1.2"/></svg>
<svg class="a" style="left:916px;top:555px" width="14" height="10" viewBox="0 0 14 10"><g fill="none" stroke="#e6e6e6" stroke-width="1"><rect x="3.5" y="3" width="9.5" height="6" rx="1"/><path d="M1 1.5H4M2.5 0V4M13 5V7"/></g><path d="M5 5H11V7H5Z" fill="#e6e6e6"/></svg>
<svg class="a" style="left:936.5px;top:554px" width="11" height="11" viewBox="0 0 11 11"><g fill="none" stroke="#8c8c8c" stroke-width="1"><path d="M0.8 10.5A9.7 9.7 0 0 1 10.5 0.8M3 10.5A7.5 7.5 0 0 1 10.5 3M5.2 10.5A5.3 5.3 0 0 1 10.5 5.2"/></g><circle cx="9.2" cy="9.2" r="1.3" fill="#f0f0f0"/></svg>
<svg class="a" style="left:952px;top:555px" width="12" height="10" viewBox="0 0 12 10"><path d="M0.6 3.2H2.8L5.8 0.6V9.4L2.8 6.8H0.6Z" fill="none" stroke="#e6e6e6" stroke-width="1"/><path d="M7.8 3.2L11 6.6M11 3.2L7.8 6.6" stroke="#e6e6e6" stroke-width="1"/></svg>
<div class="t" style="left:972px;top:549.5px;font-size:9px;color:#eeeeee">03:41 p. m.</div>
<div class="t" style="left:973px;top:562.5px;font-size:9px;color:#eeeeee">18/03/2025</div>
<div class="a" style="left:1020px;top:548px;width:1px;height:24px;background:#5a5a5a"></div>
</body></html>
